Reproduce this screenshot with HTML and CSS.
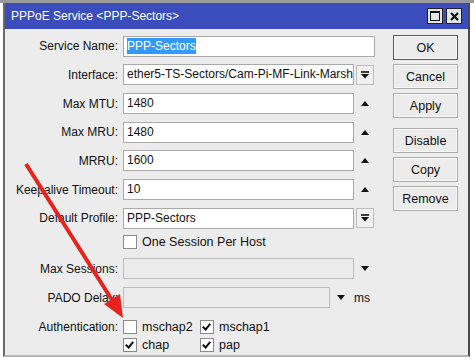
FILE: index.html
```html
<!DOCTYPE html>
<html lang="en">
<head>
    <meta charset="UTF-8">
    <meta name="viewport" content="width=device-width, initial-scale=1.0">
    <title>PPPoE Service</title>
    <link rel="stylesheet" href="styles.css">
</head>
<body>
    <div class="window">
        <!-- Title bar -->
        <div class="titlebar">
            <span class="title">PPPoE Service &lt;PPP-Sectors&gt;</span>
            <div class="tb-buttons">
                <span class="tb-btn"><span class="max-box"></span></span>
                <span class="tb-btn close">
                    <svg width="9" height="9" viewBox="0 0 9 9"><path d="M1 1 L8 8 M8 1 L1 8" stroke="#111" stroke-width="2.2"/></svg>
                </span>
            </div>
        </div>

        <div class="content">
            <div class="form">
                <div class="row">
                    <label class="label">Service Name:</label>
                    <div class="input wide"><span class="selected">PPP-Sectors</span></div>
                </div>
                <div class="row">
                    <label class="label">Interface:</label>
                    <div class="input">ether5-TS-Sectors/Cam-Pi-MF-Link-Marsh</div>
                    <span class="dd-btn">
                        <svg width="8" height="8" viewBox="0 0 8 8"><path d="M0 1 H8" stroke="#111" stroke-width="1.6"/><path d="M0 3 H8 L4 7.5 Z" fill="#111"/></svg>
                    </span>
                </div>
                <div class="row">
                    <label class="label">Max MTU:</label>
                    <div class="input">1480</div>
                    <span class="tri up"></span>
                </div>
                <div class="row">
                    <label class="label">Max MRU:</label>
                    <div class="input">1480</div>
                    <span class="tri up"></span>
                </div>
                <div class="row">
                    <label class="label">MRRU:</label>
                    <div class="input">1600</div>
                    <span class="tri up"></span>
                </div>
                <div class="row">
                    <label class="label">Keepalive Timeout:</label>
                    <div class="input">10</div>
                    <span class="tri up"></span>
                </div>
                <div class="row">
                    <label class="label">Default Profile:</label>
                    <div class="input">PPP-Sectors</div>
                    <span class="dd-btn">
                        <svg width="8" height="8" viewBox="0 0 8 8"><path d="M0 1 H8" stroke="#111" stroke-width="1.6"/><path d="M0 3 H8 L4 7.5 Z" fill="#111"/></svg>
                    </span>
                </div>
                <div class="row check-row">
                    <span class="label"></span>
                    <span class="check"></span><span class="check-text">One Session Per Host</span>
                </div>
                <div class="row">
                    <label class="label">Max Sessions:</label>
                    <div class="input disabled"></div>
                    <span class="tri down"></span>
                </div>
                <div class="row">
                    <label class="label">PADO Delay:</label>
                    <div class="input disabled short"></div>
                    <span class="tri down"></span>
                    <span class="unit">ms</span>
                </div>
                <div class="auth">
                    <span class="label">Authentication:</span>
                    <div class="auth-grid">
                        <span class="opt"><span class="check"></span>mschap2</span>
                        <span class="opt"><span class="check on"></span>mschap1</span>
                        <span class="opt"><span class="check on"></span>chap</span>
                        <span class="opt"><span class="check on"></span>pap</span>
                    </div>
                </div>
            </div>

            <div class="buttons">
                <button class="btn default">OK</button>
                <button class="btn">Cancel</button>
                <button class="btn">Apply</button>
                <button class="btn spaced">Disable</button>
                <button class="btn">Copy</button>
                <button class="btn">Remove</button>
            </div>
        </div>

        <!-- red annotation arrow -->
        <svg class="arrow" width="474" height="361" viewBox="0 0 474 361">
            <line x1="26" y1="164" x2="112" y2="300" stroke="#e8231d" stroke-width="4"/>
            <polygon points="123,318 120,294 104,304" fill="#e8231d"/>
        </svg>
    </div>
</body>
</html>
```

FILE: styles.css
```css
body {
    margin: 0;
    background: #fff;
    border-top: 3px solid #9a9a9a;
    font-family: "DejaVu Sans", Tahoma, sans-serif;
    font-size: 12px;
    color: #111;
    overflow: hidden;
}
.window {
    margin-left: 3px;
    width: 463px;
    height: 352px;
    background: #ececec;
    border-left: 2px solid #6a6a6a;
    border-right: 2px solid #4a4a4a;
    border-bottom: 2px solid #b4b4b4;
    display: flex;
    flex-direction: column;
}
.titlebar {
    height: 26px;
    background: #3b4dbd;
    display: flex;
    align-items: center;
    justify-content: space-between;
    padding: 0 6px 0 6px;
    flex: none;
}
.title {
    color: #fff;
    font-family: "Liberation Sans", Arial, sans-serif;
    font-size: 12px;
}
.tb-buttons {
    display: flex;
    gap: 3px;
}
.tb-btn {
    width: 14px;
    height: 14px;
    background: #e4e4e4;
    border: 1px solid #222;
    display: flex;
    align-items: center;
    justify-content: center;
}
.max-box {
    width: 8px;
    height: 7px;
    border: 1px solid #111;
    border-top-width: 2px;
}
.content {
    display: flex;
    padding-top: 3px;
}
.form {
    width: 385px;
    font-family: "Liberation Sans", Arial, sans-serif;
}
.row {
    display: flex;
    align-items: center;
    height: 28.67px;
}
.label {
    width: 113px;
    margin-right: 5px;
    text-align: right;
    flex: none;
}
.input {
    box-sizing: border-box;
    width: 231px;
    height: 21px;
    background: #fff;
    border: 1px solid #a9a9a9;
    padding-left: 3px;
    line-height: 19px;
    white-space: nowrap;
    overflow: hidden;
    font-size: 12px;
}
.input.wide {
    width: 252px;
}
.input.short {
    width: 207px;
}
.input.disabled {
    background: #ececec;
    border-color: #bdbdbd;
}
.selected {
    background: #3399ff;
    color: #fff;
    padding: 1px 0;
}
.dd-btn {
    box-sizing: border-box;
    width: 18px;
    height: 20px;
    margin-left: 2px;
    border: 1px solid #bcbcbc;
    background: #f0f0f0;
    display: flex;
    align-items: center;
    justify-content: center;
}
.tri {
    width: 0;
    height: 0;
    margin-left: 7px;
    border-left: 4.5px solid transparent;
    border-right: 4.5px solid transparent;
}
.tri.up {
    border-bottom: 5px solid #111;
}
.tri.down {
    border-top: 5px solid #111;
}
.unit {
    margin-left: 9px;
}
.check-row {
    height: 26px;
    margin-top: -4px;
}
.check {
    width: 12px;
    height: 12px;
    background: #fff;
    border: 1px solid #8a8a8a;
    margin-right: 5px;
    flex: none;
    position: relative;
}
.check.on::after {
    content: "";
    position: absolute;
    left: 3px;
    top: 1px;
    width: 3px;
    height: 6px;
    border-right: 2px solid #111;
    border-bottom: 2px solid #111;
    transform: rotate(40deg);
}
.check-text {
    font-size: 12.5px;
}
.auth {
    display: flex;
    margin-top: 8px;
}
.auth .label {
    line-height: 14px;
}
.auth-grid {
    display: grid;
    grid-template-columns: 77px auto;
    row-gap: 4px;
    font-size: 12.5px;
}
.opt {
    display: flex;
    align-items: center;
    height: 14px;
}
.buttons {
    display: flex;
    flex-direction: column;
    gap: 4px;
    margin-left: 3px;
    margin-top: 3px;
}
.btn {
    width: 65px;
    height: 25px;
    background: #ececec;
    border: 1px solid #adadad;
    box-shadow: inset 0 0 0 1px #f8f8f8;
    font-family: "Liberation Sans", Arial, sans-serif;
    font-size: 12.5px;
    color: #111;
    padding: 0;
}
.btn.default {
    border-color: #5a5a5a;
}
.btn.spaced {
    margin-top: 6px;
}
.arrow {
    position: absolute;
    left: 0;
    top: 0;
    pointer-events: none;
}
```
